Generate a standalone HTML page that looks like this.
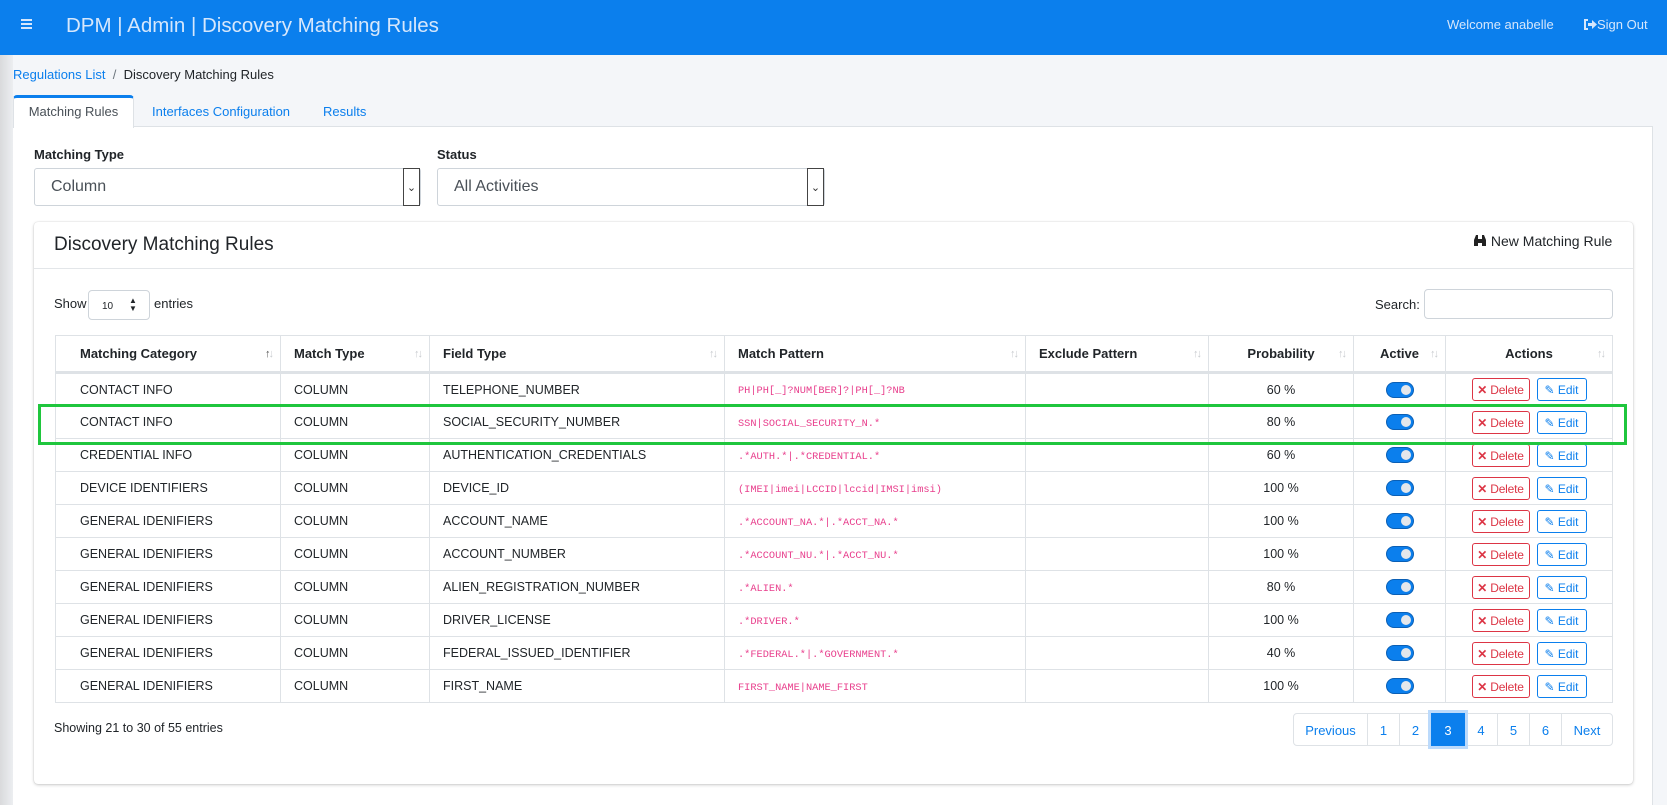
<!DOCTYPE html>
<html><head><meta charset="utf-8">
<style>
*{box-sizing:border-box;margin:0;padding:0}
body{width:1667px;height:805px;overflow:hidden;background:#f4f6f9;font-family:"Liberation Sans",Arial,sans-serif;color:#212529;position:relative}
.abs{position:absolute}
.hdr{left:0;top:0;width:1667px;height:55px;background:#0b7fed}
.hdr .t{left:66px;top:14px;font-size:20.5px;color:#d6e7fc}
.hdr .w{top:17px;font-size:13px;color:#d6e7fc}
.lstrip{left:0;top:55px;width:13px;height:750px;background:linear-gradient(to right,#d9dadc,#eceef1)}
.main{left:13px;top:127px;width:1640px;height:678px;background:#fff;border-right:1px solid #dee2e6}
.tabline{left:13px;top:126px;width:1640px;height:1px;background:#dee2e6}
.tab{top:95px;height:32px;font-size:13px;color:#0b7fed;padding-top:9px}
.lbl{font-size:13px;font-weight:bold;top:147px}
.sel{top:168px;height:38px;border:1px solid #ced4da;border-radius:3px;font-size:16px;color:#495057;padding:9px 0 0 16px;background:#fff}
.sel .ar{position:absolute;right:0;top:-1px;width:17px;height:38px;border:1px solid #444;background:#fff;font-size:11px;text-align:center;padding-top:12px;color:#333}
.card{left:34px;top:222px;width:1599px;height:562px;background:#fff;border-radius:4px;box-shadow:0 0 1px rgba(0,0,0,.2),0 1px 3px rgba(0,0,0,.2)}
table{position:absolute;left:55px;top:335px;border-collapse:collapse;font-size:12.5px;table-layout:fixed}
th,td{border:1px solid #dee2e6;height:33px;padding:0 13px;white-space:nowrap}
th{height:37px;border-bottom:3px solid #dee2e6;font-weight:bold;font-size:13px;text-align:left;position:relative}
th .s{position:absolute;right:8px;top:12px;font-size:11px;color:#c9ccd0;letter-spacing:-2px;font-weight:normal}
td.m{font-family:"Liberation Mono",monospace;font-size:10.3px;color:#e83e8c;padding-top:3px}
.c{text-align:center}
.tg{display:inline-block;width:28px;height:16px;border-radius:8px;background:#0b7fed;position:relative;vertical-align:middle;border:1px solid #0a5fb5}
.tg:after{content:"";position:absolute;right:2px;top:2px;width:10px;height:10px;border-radius:50%;background:#e4e7eb}
.bd{display:inline-block;width:58px;height:23px;border:1px solid #dc3545;color:#dc3545;border-radius:3px;font-size:12px;padding-top:4px;vertical-align:middle;text-align:center;letter-spacing:-0.2px}
.be{display:inline-block;width:50px;height:23px;border:1px solid #0b7fed;color:#0b7fed;border-radius:3px;font-size:12px;padding-top:4px;vertical-align:middle;margin-left:7px;text-align:center}
.pg{top:713px;height:33px;border:1px solid #dee2e6;font-size:13px;color:#0b7fed;text-align:center;padding-top:9px;background:#fff}
</style></head><body>
<div class="abs hdr">
 <div class="abs" style="left:21px;top:19px;width:11px;height:2px;background:#d6e7fc;box-shadow:0 4px 0 #d6e7fc,0 8px 0 #d6e7fc"></div>
 <div class="abs t">DPM | Admin | Discovery Matching Rules</div>
 <div class="abs w" style="left:1447px">Welcome anabelle</div>
 <div class="abs w" style="left:1583px"><svg width="14" height="11" viewBox="0 0 14 11" style="vertical-align:-1px"><path d="M5 1H2v9h3" fill="none" stroke="#d6e7fc" stroke-width="2"/><path d="M5 4h4V1l5 4.5L9 10V7H5z" fill="#d6e7fc"/></svg>Sign Out</div>
</div>
<div class="abs lstrip"></div>
<div class="abs" style="left:13px;top:67px;font-size:13px"><span style="color:#0b7fed">Regulations List</span><span style="color:#6c757d">&nbsp;&nbsp;/&nbsp;&nbsp;</span>Discovery Matching Rules</div>
<div class="abs main"></div>
<div class="abs tabline"></div>
<div class="abs tab" style="left:13px;width:121px;background:#fff;border:1px solid #dee2e6;border-top:3px solid #0b7fed;border-bottom:none;border-radius:4px 4px 0 0;color:#495057;text-align:center;padding-top:6px;height:33px">Matching Rules</div>
<div class="abs tab" style="left:152px">Interfaces Configuration</div>
<div class="abs tab" style="left:323px">Results</div>
<div class="abs lbl" style="left:34px">Matching Type</div>
<div class="abs lbl" style="left:437px">Status</div>
<div class="abs sel" style="left:34px;width:387px">Column<div class="ar">&#8964;</div></div>
<div class="abs sel" style="left:437px;width:388px">All Activities<div class="ar">&#8964;</div></div>
<div class="abs card"></div>
<div class="abs" style="left:34px;top:268px;width:1599px;height:1px;background:#e3e6e9"></div>
<div class="abs" style="left:54px;top:234px;font-size:19px">Discovery Matching Rules</div>
<div class="abs" style="left:1473px;top:233px;font-size:14px"><svg width="14" height="13" viewBox="0 0 14 13" style="vertical-align:-1px"><path d="M1 12V6l2-5h2v11zM13 12V6l-2-5H9v11zM5 5h4v4H5z" fill="#222"/></svg> New Matching Rule</div>
<div class="abs" style="left:54px;top:296px;font-size:13px">Show</div>
<div class="abs" style="left:88px;top:290px;width:62px;height:30px;border:1px solid #ced4da;border-radius:4px;font-size:10px;padding:10px 0 0 13px">10<span style="position:absolute;left:40px;top:6px;font-size:8px;line-height:8px">&#9650;<br>&#9660;</span></div>
<div class="abs" style="left:154px;top:296px;font-size:13px">entries</div>
<div class="abs" style="left:1375px;top:297px;font-size:13px">Search:</div>
<div class="abs" style="left:1424px;top:289px;width:189px;height:30px;border:1px solid #ced4da;border-radius:4px"></div>
<table>
<colgroup><col style="width:225px"><col style="width:149px"><col style="width:295px"><col style="width:301px"><col style="width:183px"><col style="width:145px"><col style="width:92px"><col style="width:167px"></colgroup>
<tr><th style="padding-left:24px">Matching Category<span class="s" style="color:#555">↑<span style="color:#c9ccd0">↓</span></span></th><th>Match Type<span class="s">↑↓</span></th><th>Field Type<span class="s">↑↓</span></th><th>Match Pattern<span class="s">↑↓</span></th><th>Exclude Pattern<span class="s">↑↓</span></th><th class="c">Probability<span class="s">↑↓</span></th><th class="c">Active<span class="s">↑↓</span></th><th class="c">Actions<span class="s">↑↓</span></th></tr>
<tr><td style="padding-left:24px">CONTACT INFO</td><td>COLUMN</td><td>TELEPHONE_NUMBER</td><td class="m">PH|PH[_]?NUM[BER]?|PH[_]?NB</td><td></td><td class="c">60 %</td><td class="c"><span class="tg"></span></td><td class="c"><span class="bd"><b>✕</b> Delete</span><span class="be">✎ Edit</span></td></tr>
<tr><td style="padding-left:24px">CONTACT INFO</td><td>COLUMN</td><td>SOCIAL_SECURITY_NUMBER</td><td class="m">SSN|SOCIAL_SECURITY_N.*</td><td></td><td class="c">80 %</td><td class="c"><span class="tg"></span></td><td class="c"><span class="bd"><b>✕</b> Delete</span><span class="be">✎ Edit</span></td></tr>
<tr><td style="padding-left:24px">CREDENTIAL INFO</td><td>COLUMN</td><td>AUTHENTICATION_CREDENTIALS</td><td class="m">.*AUTH.*|.*CREDENTIAL.*</td><td></td><td class="c">60 %</td><td class="c"><span class="tg"></span></td><td class="c"><span class="bd"><b>✕</b> Delete</span><span class="be">✎ Edit</span></td></tr>
<tr><td style="padding-left:24px">DEVICE IDENTIFIERS</td><td>COLUMN</td><td>DEVICE_ID</td><td class="m">(IMEI|imei|LCCID|lccid|IMSI|imsi)</td><td></td><td class="c">100 %</td><td class="c"><span class="tg"></span></td><td class="c"><span class="bd"><b>✕</b> Delete</span><span class="be">✎ Edit</span></td></tr>
<tr><td style="padding-left:24px">GENERAL IDENIFIERS</td><td>COLUMN</td><td>ACCOUNT_NAME</td><td class="m">.*ACCOUNT_NA.*|.*ACCT_NA.*</td><td></td><td class="c">100 %</td><td class="c"><span class="tg"></span></td><td class="c"><span class="bd"><b>✕</b> Delete</span><span class="be">✎ Edit</span></td></tr>
<tr><td style="padding-left:24px">GENERAL IDENIFIERS</td><td>COLUMN</td><td>ACCOUNT_NUMBER</td><td class="m">.*ACCOUNT_NU.*|.*ACCT_NU.*</td><td></td><td class="c">100 %</td><td class="c"><span class="tg"></span></td><td class="c"><span class="bd"><b>✕</b> Delete</span><span class="be">✎ Edit</span></td></tr>
<tr><td style="padding-left:24px">GENERAL IDENIFIERS</td><td>COLUMN</td><td>ALIEN_REGISTRATION_NUMBER</td><td class="m">.*ALIEN.*</td><td></td><td class="c">80 %</td><td class="c"><span class="tg"></span></td><td class="c"><span class="bd"><b>✕</b> Delete</span><span class="be">✎ Edit</span></td></tr>
<tr><td style="padding-left:24px">GENERAL IDENIFIERS</td><td>COLUMN</td><td>DRIVER_LICENSE</td><td class="m">.*DRIVER.*</td><td></td><td class="c">100 %</td><td class="c"><span class="tg"></span></td><td class="c"><span class="bd"><b>✕</b> Delete</span><span class="be">✎ Edit</span></td></tr>
<tr><td style="padding-left:24px">GENERAL IDENIFIERS</td><td>COLUMN</td><td>FEDERAL_ISSUED_IDENTIFIER</td><td class="m">.*FEDERAL.*|.*GOVERNMENT.*</td><td></td><td class="c">40 %</td><td class="c"><span class="tg"></span></td><td class="c"><span class="bd"><b>✕</b> Delete</span><span class="be">✎ Edit</span></td></tr>
<tr><td style="padding-left:24px">GENERAL IDENIFIERS</td><td>COLUMN</td><td>FIRST_NAME</td><td class="m">FIRST_NAME|NAME_FIRST</td><td></td><td class="c">100 %</td><td class="c"><span class="tg"></span></td><td class="c"><span class="bd"><b>✕</b> Delete</span><span class="be">✎ Edit</span></td></tr>
</table>
<div class="abs" style="left:38px;top:404px;width:1589px;height:41px;border:3px solid #1fc63d"></div>
<div class="abs" style="left:54px;top:721px;font-size:12.5px">Showing 21 to 30 of 55 entries</div>
<div class="abs pg" style="left:1293px;width:75px;border-radius:4px 0 0 4px">Previous</div>
<div class="abs pg" style="left:1367px;width:33px">1</div>
<div class="abs pg" style="left:1399px;width:33px">2</div>
<div class="abs pg" style="left:1431px;width:34px;background:#0b7fed;color:#fff;border-color:#0b7fed;box-shadow:0 0 0 3px #bcdafb;z-index:2">3</div>
<div class="abs pg" style="left:1464px;width:34px">4</div>
<div class="abs pg" style="left:1497px;width:33px">5</div>
<div class="abs pg" style="left:1529px;width:33px">6</div>
<div class="abs pg" style="left:1561px;width:52px;border-radius:0 4px 4px 0">Next</div>
</body></html>
